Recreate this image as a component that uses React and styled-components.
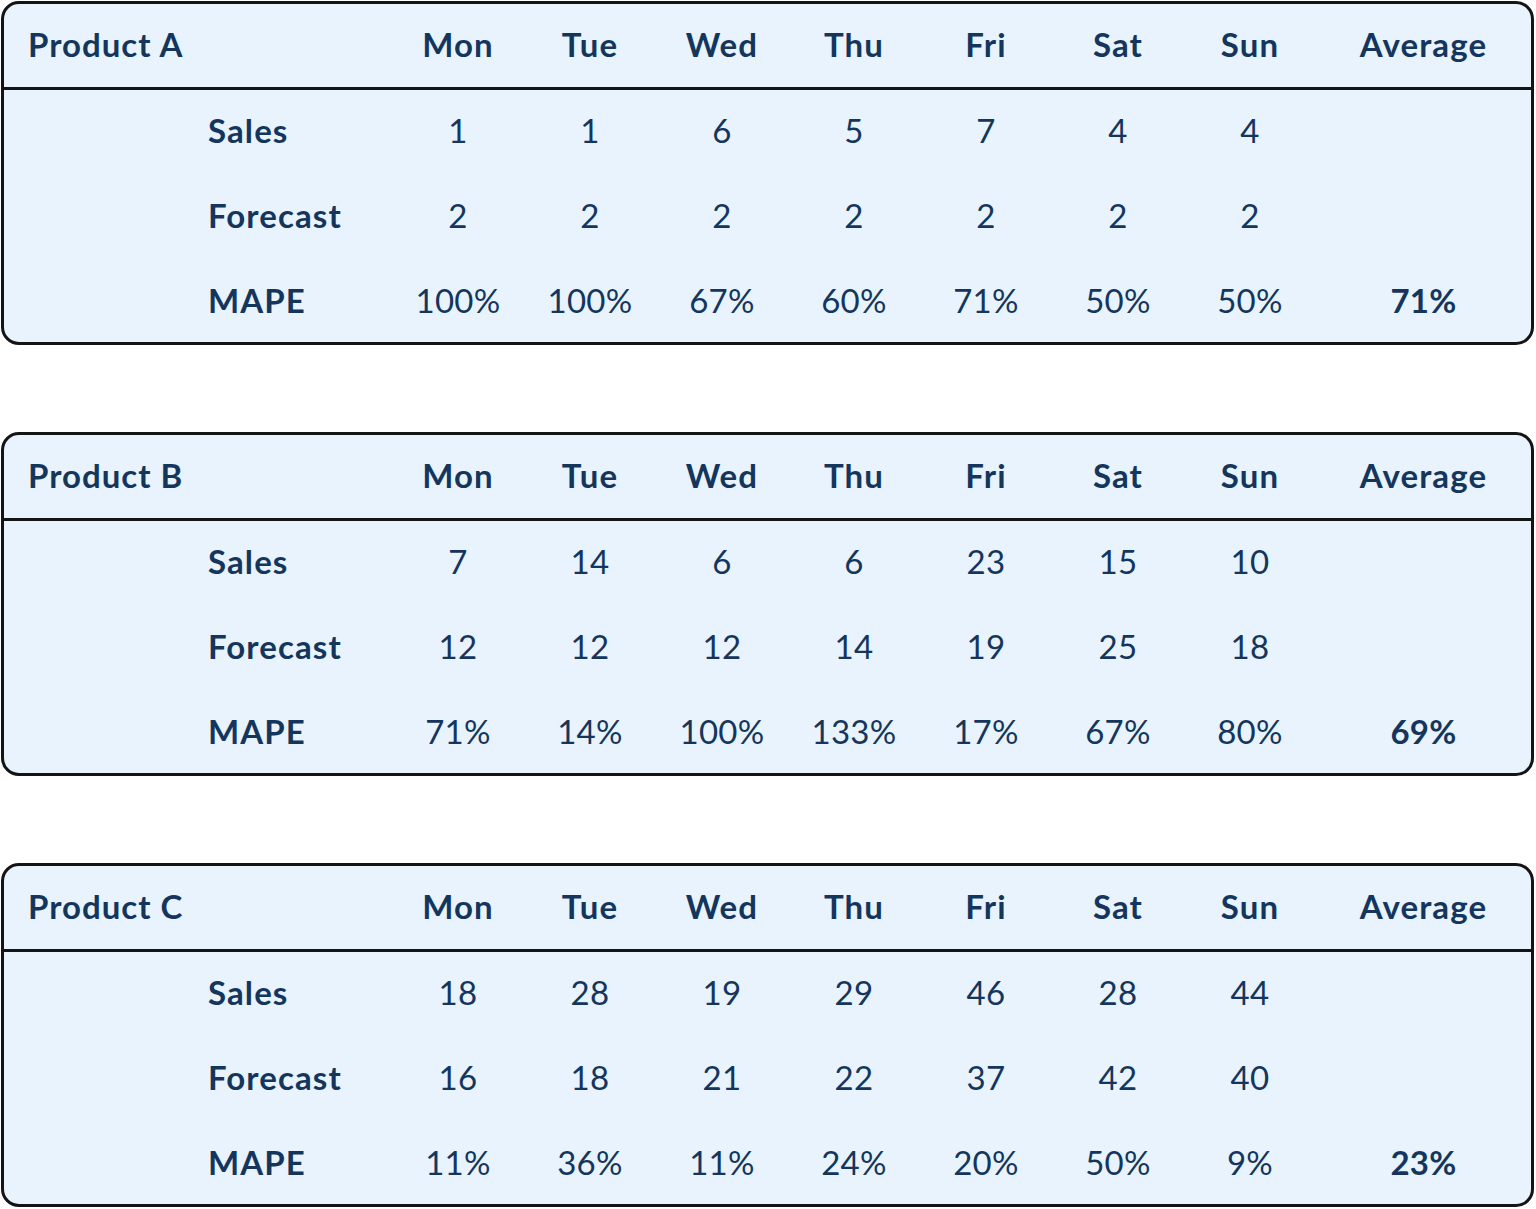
import React from "react";
import styled, { createGlobalStyle } from "styled-components";

const Global = createGlobalStyle`
  html, body { margin: 0; padding: 0; background: #ffffff; }
  body { font-family: Lato, "Open Sans", sans-serif; color: #14365d; }
`;

const Page = styled.div`
  display: flex;
  flex-direction: column;
  gap: 87px;
  padding: 1px 2px 0 1px;
  width: 1533px;
`;

const Card = styled.section`
  background: #e8f3fd;
  border: 3px solid #141414;
  border-radius: 18px;
  height: 344px;
  box-sizing: border-box;
  display: flex;
  flex-direction: column;
  overflow: hidden;
`;

const Grid = styled.div`
  display: grid;
  grid-template-columns: 180px 184px repeat(7, 132px) 1fr;
  padding-left: 24px;
  align-items: center;
`;

const Head = styled(Grid)`
  box-sizing: border-box;
  height: 86px;
  border-bottom: 3px solid #141414;
  padding-bottom: 3px;
  flex: none;
`;

const Body = styled.div`
  display: flex;
  flex-direction: column;
  margin-top: -3px;
`;

const Row = styled(Grid)`
  height: 85px;
`;

const Title = styled.div`
  grid-column: span 2;
  font-weight: 700;
  font-size: 33px;
  letter-spacing: 1px;
`;

const HeadCell = styled.div`
  text-align: center;
  font-weight: 700;
  font-size: 33px;
  letter-spacing: 1.1px;
`;

const Label = styled.div`
  grid-column: 2;
  font-weight: 700;
  font-size: 33px;
  letter-spacing: 1.1px;
`;

const Cell = styled.div`
  text-align: center;
  font-size: 33px;
  font-weight: ${(p) => (p.$bold ? 700 : 400)};
  letter-spacing: 0.3px;
`;

const days = ["Mon", "Tue", "Wed", "Thu", "Fri", "Sat", "Sun"];

const products = [
  {
    name: "Product A",
    sales: [1, 1, 6, 5, 7, 4, 4],
    forecast: [2, 2, 2, 2, 2, 2, 2],
    mape: ["100%", "100%", "67%", "60%", "71%", "50%", "50%"],
    avg: "71%",
  },
  {
    name: "Product B",
    sales: [7, 14, 6, 6, 23, 15, 10],
    forecast: [12, 12, 12, 14, 19, 25, 18],
    mape: ["71%", "14%", "100%", "133%", "17%", "67%", "80%"],
    avg: "69%",
  },
  {
    name: "Product C",
    sales: [18, 28, 19, 29, 46, 28, 44],
    forecast: [16, 18, 21, 22, 37, 42, 40],
    mape: ["11%", "36%", "11%", "24%", "20%", "50%", "9%"],
    avg: "23%",
  },
];

function ProductCard({ p }) {
  return (
    <Card>
      <Head>
        <Title>{p.name}</Title>
        {days.map((d) => (
          <HeadCell key={d}>{d}</HeadCell>
        ))}
        <HeadCell>Average</HeadCell>
      </Head>
      <Body>
        <Row>
          <Label>Sales</Label>
          {p.sales.map((v, i) => (
            <Cell key={i}>{v}</Cell>
          ))}
          <Cell />
        </Row>
        <Row>
          <Label>Forecast</Label>
          {p.forecast.map((v, i) => (
            <Cell key={i}>{v}</Cell>
          ))}
          <Cell />
        </Row>
        <Row>
          <Label>MAPE</Label>
          {p.mape.map((v, i) => (
            <Cell key={i}>{v}</Cell>
          ))}
          <Cell $bold>{p.avg}</Cell>
        </Row>
      </Body>
    </Card>
  );
}

export default function App() {
  return (
    <>
      <Global />
      <Page>
        {products.map((p) => (
          <ProductCard key={p.name} p={p} />
        ))}
      </Page>
    </>
  );
}
